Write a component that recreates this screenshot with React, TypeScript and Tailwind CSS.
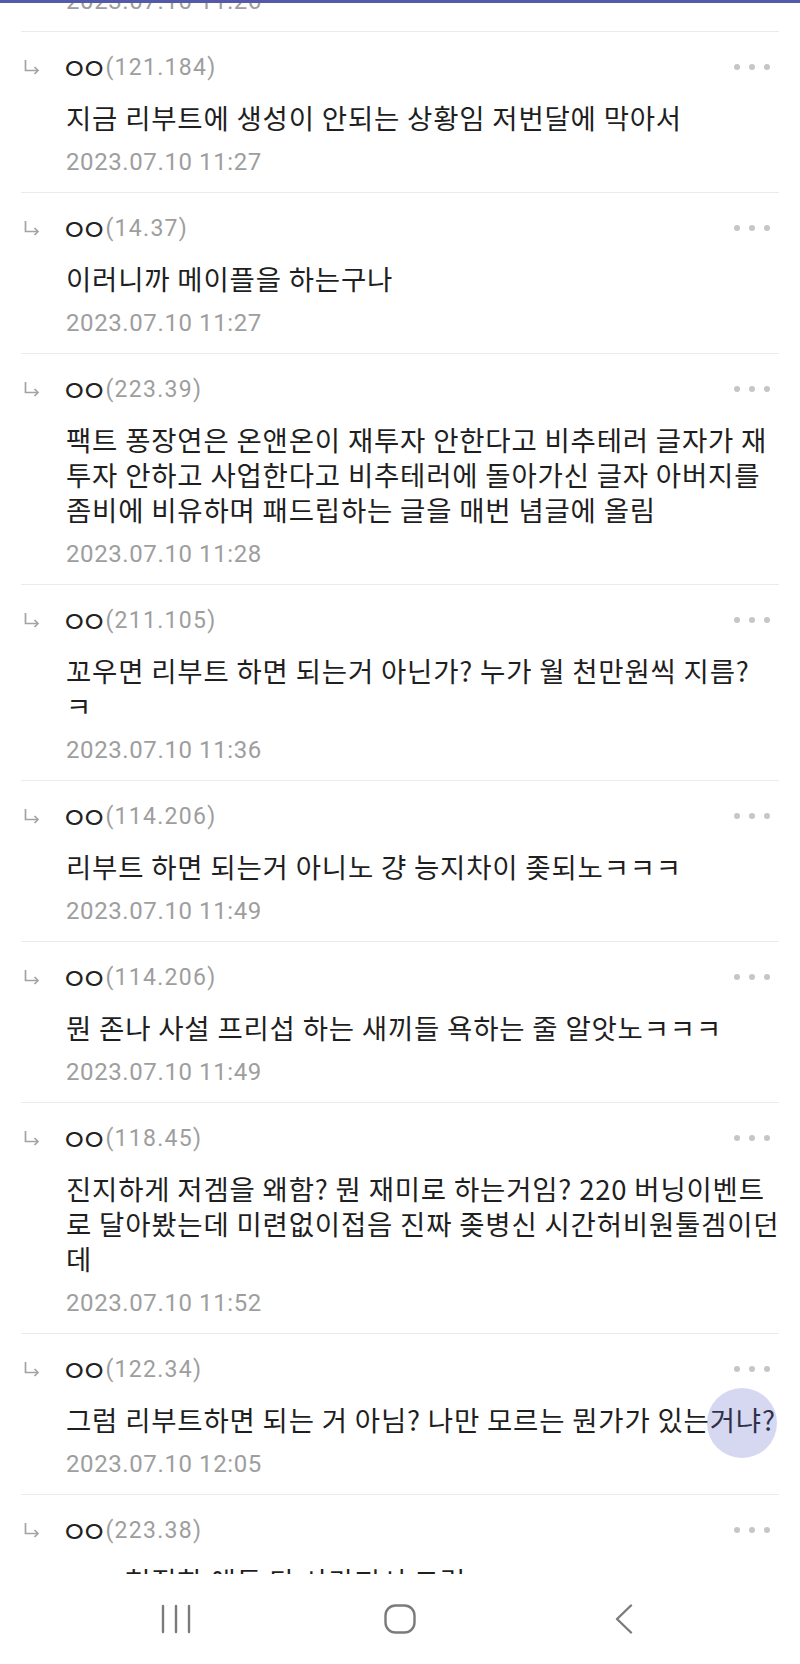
type Comment = {
  ip: string;
  lines: string[];
  date: string;
};

const comments: Comment[] = [
  {
    ip: '121.184',
    lines: ['지금 리부트에 생성이 안되는 상황임 저번달에 막아서'],
    date: '2023.07.10 11:27',
  },
  {
    ip: '14.37',
    lines: ['이러니까 메이플을 하는구나'],
    date: '2023.07.10 11:27',
  },
  {
    ip: '223.39',
    lines: [
      '팩트 퐁장연은 온앤온이 재투자 안한다고 비추테러 글자가 재',
      '투자 안하고 사업한다고 비추테러에 돌아가신 글자 아버지를',
      '좀비에 비유하며 패드립하는 글을 매번 념글에 올림',
    ],
    date: '2023.07.10 11:28',
  },
  {
    ip: '211.105',
    lines: ['꼬우면 리부트 하면 되는거 아닌가? 누가 월 천만원씩 지름?', 'ㅋ'],
    date: '2023.07.10 11:36',
  },
  {
    ip: '114.206',
    lines: ['리부트 하면 되는거 아니노 걍 능지차이 좆되노ㅋㅋㅋ'],
    date: '2023.07.10 11:49',
  },
  {
    ip: '114.206',
    lines: ['뭔 존나 사설 프리섭 하는 새끼들 욕하는 줄 알앗노ㅋㅋㅋ'],
    date: '2023.07.10 11:49',
  },
  {
    ip: '118.45',
    lines: [
      '진지하게 저겜을 왜함? 뭔 재미로 하는거임? 220 버닝이벤트',
      '로 달아봤는데 미련없이접음 진짜 좆병신 시간허비원툴겜이던',
      '데',
    ],
    date: '2023.07.10 11:52',
  },
  {
    ip: '122.34',
    lines: ['그럼 리부트하면 되는 거 아님? 나만 모르는 뭔가가 있는거냐?'],
    date: '2023.07.10 12:05',
  },
  {
    ip: '223.38',
    lines: ['ㄴㄴ 현질한 애들 다 사라져서 그럼'],
    date: '2023.07.10 12:09',
  },
];

const ReplyArrow = () => (
  <svg width="17" height="16" viewBox="0 0 17 16" fill="none" stroke="#a3a3a3" strokeWidth="1.7">
    <path d="M2.5 1 V11.5 H15" />
    <path d="M11.5 8 L15 11.5 L11.5 15" />
  </svg>
);

const MoreDots = () => (
  <div className="flex items-center gap-[9px]">
    <span className="h-[6px] w-[6px] rounded-full bg-[#c6c6c6]" />
    <span className="h-[6px] w-[6px] rounded-full bg-[#c6c6c6]" />
    <span className="h-[6px] w-[6px] rounded-full bg-[#c6c6c6]" />
  </div>
);

const DateLine = ({ date }: { date: string }) => (
  <div className="h-[30px] pl-[45px] font-['Roboto',sans-serif] text-[24px] leading-[30px] tracking-[0.6px] text-[#9e9e9e]">
    {date}
  </div>
);

const CommentRow = ({ ip, lines, date }: Comment) => (
  <div className="mx-[21px] border-t border-[#ebebeb] pt-[20px] pb-[15px]">
    <div className="flex h-[30px] items-center">
      <div className="w-[45px] pl-[2px]">
        <ReplyArrow />
      </div>
      <div className="flex flex-1 items-center whitespace-nowrap">
        {/* anonymous nickname, jamo pulled tight */}
        <span className="mr-[5px] ml-[-5px] font-['Noto_Sans_CJK_KR',sans-serif] text-[29px] leading-none tracking-[-7px] text-[#222]">
          ㅇㅇ
        </span>
        <span className="font-['Roboto',sans-serif] text-[23px] leading-none tracking-[1.3px] text-[#9e9e9e]">
          ({ip})
        </span>
      </div>
      <div className="pr-[9px]">
        <MoreDots />
      </div>
    </div>
    <div className="mt-[18px] pl-[45px] font-['Noto_Sans_CJK_KR',sans-serif] text-[27.5px] leading-[35px] tracking-[0.8px] text-[#1f1f1f]">
      {lines.map((line, i) => (
        <div key={i} className="whitespace-nowrap">
          {line}
        </div>
      ))}
    </div>
    <div className="mt-[12px]">
      <DateLine date={date} />
    </div>
  </div>
);

const NavBar = () => (
  <div className="grid h-[90px] grid-cols-[224px_224px_224px] items-center justify-center bg-white">
    <div className="flex justify-center">
      <svg width="30" height="30" viewBox="0 0 30 30" fill="none" stroke="#7b7b7b" strokeWidth="2.4" strokeLinecap="round">
        <path d="M2 2 V28" />
        <path d="M15 2 V28" />
        <path d="M28 2 V28" />
      </svg>
    </div>
    <div className="flex justify-center">
      <svg width="32" height="30" viewBox="0 0 32 30" fill="none" stroke="#7b7b7b" strokeWidth="2.4">
        <rect x="1.5" y="1.5" width="29" height="27" rx="10" />
      </svg>
    </div>
    <div className="flex justify-center">
      <svg width="18" height="30" viewBox="0 0 18 30" fill="none" stroke="#7b7b7b" strokeWidth="2.4" strokeLinecap="round" strokeLinejoin="round">
        <path d="M16 1.5 L2 15 L16 28.5" />
      </svg>
    </div>
  </div>
);

export default function App() {
  return (
    <div className="relative flex h-[1664px] w-[800px] flex-col overflow-hidden bg-white">
      <div className="h-[1574px] overflow-hidden">
        <div className="mx-[21px] mt-[-14px] pb-[15px]">
          <DateLine date="2023.07.10 11:26" />
        </div>
        {comments.map((c, i) => (
          <CommentRow key={i} {...c} />
        ))}
      </div>
      <NavBar />

      {/* status bar edge */}
      <div className="absolute top-0 left-0 h-[3px] w-full bg-[#5659a8]" />
      {/* touch ripple */}
      <div className="absolute top-[1388px] left-[707px] h-[70px] w-[70px] rounded-full bg-[rgba(90,100,200,0.25)]" />
    </div>
  );
}
